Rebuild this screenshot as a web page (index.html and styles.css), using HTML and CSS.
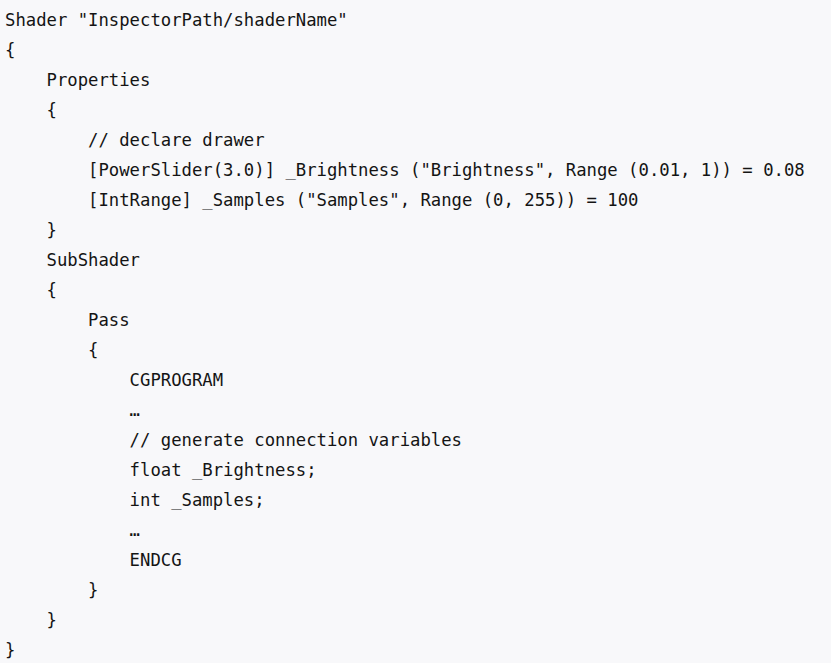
FILE: index.html
```html
<!DOCTYPE html>
<html>
<head>
<meta charset="utf-8">
<link rel="stylesheet" href="styles.css">
</head>
<body>
<pre class="code">Shader "InspectorPath/shaderName"
{
    Properties
    {
        // declare drawer
        [PowerSlider(3.0)] _Brightness ("Brightness", Range (0.01, 1)) = 0.08
        [IntRange] _Samples ("Samples", Range (0, 255)) = 100
    }
    SubShader
    {
        Pass
        {
            CGPROGRAM
            …
            // generate connection variables
            float _Brightness;
            int _Samples;
            …
            ENDCG
        }
    }
}</pre>
</body>
</html>
```
FILE: styles.css
```css
html, body {
  margin: 0;
  padding: 0;
  background: #f8f8fa;
}
.code {
  margin: 0;
  padding: 5px 0 0 5px;
  font-family: "DejaVu Sans Mono", monospace;
  font-size: 17.25px;
  line-height: 30px;
  color: #141414;
  height: 663px;
  box-sizing: border-box;
}
```
